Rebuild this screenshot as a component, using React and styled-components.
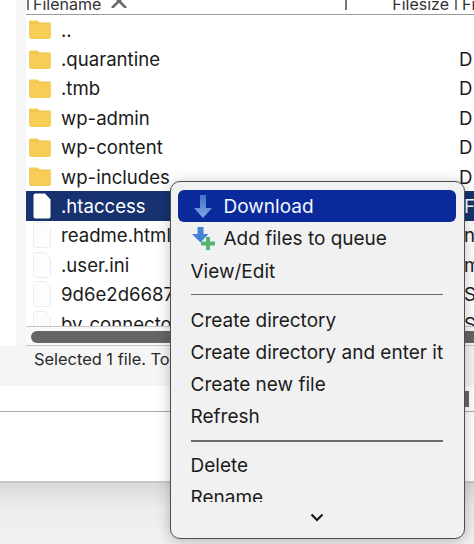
import React from "react";
import styled, { createGlobalStyle } from "styled-components";

const Global = createGlobalStyle`
  html, body { margin: 0; padding: 0; background: #fff; }
  body { font-family: Inter, "Liberation Sans", sans-serif; -webkit-font-smoothing: antialiased; }
`;

const Page = styled.div`
  position: relative;
  width: 474px;
  height: 544px;
  overflow: hidden;
  display: flex;
  flex-direction: column;
  background: #fff;
`;
const BrowserPane = styled.div`
  height: 346px;
  flex: none;
  margin-left: 16px;
  padding-left: 10px;
  background: #f6f6f7;
  display: flex;
  flex-direction: column;
`;
const Header = styled.div`
  height: 14px;
  flex: none;
  display: flex;
  align-items: flex-start;
  padding-left: 1px;
  background: #fff;
  border-bottom: 1px solid #9a9a9a;
  font-size: 16px;
  line-height: 14px;
  color: #333;
  overflow: hidden;
`;
const HeadCell = styled.span`
  width: ${(p) => p.$w}px;
  flex: none;
  display: flex;
  gap: 10px;
  justify-content: ${(p) => (p.$end ? "flex-end" : "flex-start")};
  padding-left: ${(p) => p.$pad || 0}px;
  margin-right: ${(p) => p.$after || 0}px;
  box-sizing: border-box;
  margin-top: -3px;
  white-space: nowrap;
`;
const HeadSep = styled.i`
  width: 2px;
  height: 10px;
  flex: none;
  background: #777;
`;
const SortMark = styled.svg`
  flex: none;
  width: 18px;
  height: 8px;
  margin-top: 3px;
`;
const List = styled.div`
  height: 311px;
  flex: none;
  overflow: hidden;
  background: #fff;
`;
const Row = styled.div`
  height: 29.4px;
  display: flex;
  align-items: center;
  background: ${(p) => (p.$selected ? "#17326f" : "#fff")};
  color: ${(p) => (p.$selected ? "#fff" : "#1b1b1b")};
  font-size: 18.6px;
`;
const IconCell = styled.span`
  width: 35px;
  flex: none;
  display: flex;
  padding-left: ${(p) => (p.$file ? 7 : 3)}px;
  box-sizing: border-box;
`;
const Name = styled.span`
  width: 398px;
  flex: none;
  white-space: nowrap;
  overflow: hidden;
`;
const Kind = styled.span`
  white-space: nowrap;
  padding-left: ${(p) => (p.$cut ? 5 : 0)}px;
`;
const ScrollTrack = styled.div`
  flex: none;
  height: 14px;
  padding: 4px 0 0 5px;
  background: #f9f9f9;
  border-top: 1px solid #c4c4c4;
  border-bottom: 1px solid #c4c4c4;
  overflow: hidden;
`;
const ScrollThumb = styled.div`
  height: 12px;
  width: 450px;
  border-radius: 6px;
  background: #656565;
`;
const Status = styled.div`
  height: 40px;
  flex: none;
  box-sizing: border-box;
  padding: 4px 0 0 34px;
  background: #f5f5f6;
  font-size: 16.4px;
  color: #2b2b2b;
  line-height: 18px;
  white-space: nowrap;
`;
const Band = styled.div`
  height: 25px;
  flex: none;
  background: #fff;
  border-bottom: 1px solid #a9a9a9;
`;
const LogArea = styled.div`
  height: 69px;
  flex: none;
  background: #fff;
  border-bottom: 2px solid #c8c8c8;
`;
const Footer = styled.div`
  flex: 1;
  background: linear-gradient(#d9d9d9, #ececec 40%, #f2f2f2);
`;
const SideTab = styled.i`
  position: absolute;
  left: 465px;
  top: 391px;
  width: 4px;
  height: 16px;
  background: #666;
`;

const Menu = styled.div`
  position: absolute;
  left: 170px;
  top: 181px;
  width: 295px;
  height: 358px;
  box-sizing: border-box;
  background: #f1f1f1;
  border: 1.5px solid #4e4e4e;
  border-radius: 10px;
  box-shadow: 0 2px 14px rgba(0, 0, 0, 0.25);
  padding: 7.5px 8px 0 6.5px;
  display: flex;
  flex-direction: column;
`;
const MenuScroll = styled.div`
  height: 312px;
  overflow: hidden;
  flex: none;
`;
const Item = styled.div`
  height: 32.3px;
  box-sizing: border-box;
  padding: 2px 0 0 13px;
  display: flex;
  align-items: center;
  border-radius: 6px;
  font-size: 19px;
  white-space: nowrap;
  color: ${(p) => (p.$active ? "#f4f6ff" : "#1c1c1c")};
  background: ${(p) => (p.$active ? "#0a2a9c" : "transparent")};
`;
const IconSlot = styled.span`
  width: 33px;
  flex: none;
  display: flex;
  box-sizing: border-box;
  padding-left: ${(p) => p.$pad}px;
`;
const Rule = styled.div`
  height: 1.5px;
  background: #6b6b6b;
  margin: ${(p) => p.$top}px 13px ${(p) => p.$bottom}px;
`;
const More = styled.div`
  display: flex;
  justify-content: center;
  padding-top: 11px;
`;

const Folder = () => (
  <svg width="22" height="19" viewBox="0 0 23 20">
    <path d="M1.5 0.5h6.5c1.2 0 1.8 0.6 2.6 1.6l0.7 0.9H21c1.1 0 2 0.9 2 2v13c0 1.1-0.9 2-2 2H2c-1.1 0-2-0.9-2-2V2c0-0.9 0.7-1.5 1.5-1.5z" fill="#f7cd55" />
    <path d="M0 3.2h23" stroke="#e3b648" strokeWidth="0.7" />
  </svg>
);
const FileIcon = ({ selected }) => (
  <svg width="18" height="26" viewBox="0 0 18 26">
    <path
      d="M2.5 .5h9.5L17.5 6.5v17c0 1.1-.9 2-2 2h-13c-1.1 0-2-.9-2-2v-21c0-1.1.9-2 2-2z"
      fill={selected ? "#fff" : "#fdfdfd"}
      stroke={selected ? "none" : "#ececec"}
    />
  </svg>
);
const DownloadIcon = () => (
  <svg width="18" height="23" viewBox="0 0 18 23">
    <defs>
      <linearGradient id="dl" x1="0" y1="0" x2="0" y2="1">
        <stop offset="0" stopColor="#3f74c9" />
        <stop offset="1" stopColor="#7ba6e0" />
      </linearGradient>
    </defs>
    <path d="M6 0h6v13h6l-9 10L0 13h6z" fill="url(#dl)" />
  </svg>
);
const QueueIcon = () => (
  <svg width="23" height="24" viewBox="0 0 23 24">
    <path d="M5.5 0h6v7h5L8.5 15.5 0 7h5.5z" fill="#4683d8" />
    <path d="M14 10h4v4.5h5v4h-5V23h-4v-4.5H9v-4h5z" fill="#55b56c" />
  </svg>
);

const rows = [
  { name: "..", type: "folder", kind: "" },
  { name: ".quarantine", type: "folder", kind: "D" },
  { name: ".tmb", type: "folder", kind: "D" },
  { name: "wp-admin", type: "folder", kind: "D" },
  { name: "wp-content", type: "folder", kind: "D" },
  { name: "wp-includes", type: "folder", kind: "D" },
  { name: ".htaccess", type: "file", kind: "Fi", selected: true },
  { name: "readme.html", type: "file", kind: "nt" },
  { name: ".user.ini", type: "file", kind: "m" },
  { name: "9d6e2d6687", type: "file", kind: "S" },
  { name: "by_connector", type: "file", kind: "S" },
];

export default function App() {
  return (
    <Page>
      <Global />
      <BrowserPane>
        <Header>
          <HeadSep />
          <HeadCell $w={316} $pad={4}>
            Filename
            <SortMark viewBox="0 0 18 8">
              <path d="M1 -6L15 8M15 -6L1 8" stroke="#6a6a6a" strokeWidth="2.6" fill="none" />
            </SortMark>
          </HeadCell>
          <HeadSep />
          <HeadCell $w={102} $end $after={6}>Filesize</HeadCell>
          <HeadSep />
          <HeadCell $w={20} $pad={5}>Fi</HeadCell>
        </Header>
        <List>
          {rows.map((r) => (
            <Row key={r.name} $selected={r.selected}>
              <IconCell $file={r.type === "file"}>
                {r.type === "folder" ? <Folder /> : <FileIcon selected={r.selected} />}
              </IconCell>
              <Name>{r.name}</Name>
              <Kind $cut={r.type === "file"}>{r.kind}</Kind>
            </Row>
          ))}
        </List>
        <ScrollTrack>
          <ScrollThumb />
        </ScrollTrack>
      </BrowserPane>
      <Status>Selected 1 file. To</Status>
      <Band />
      <LogArea />
      <Footer />
      <SideTab />
      <Menu>
        <MenuScroll>
          <Item $active><IconSlot $pad={3}><DownloadIcon /></IconSlot>Download</Item>
          <Item><IconSlot $pad={1}><QueueIcon /></IconSlot>Add files to queue</Item>
          <Item>View/Edit</Item>
          <Rule $top={7.5} $bottom={7.5} />
          <Item>Create directory</Item>
          <Item>Create directory and enter it</Item>
          <Item>Create new file</Item>
          <Item>Refresh</Item>
          <Rule $top={8} $bottom={6.5} />
          <Item>Delete</Item>
          <Item>Rename</Item>
        </MenuScroll>
        <More>
          <svg width="14" height="9" viewBox="0 0 14 9">
            <path d="M1.5 1.5L7 7l5.5-5.5" stroke="#1a1a1a" strokeWidth="2.2" fill="none" />
          </svg>
        </More>
      </Menu>
    </Page>
  );
}
